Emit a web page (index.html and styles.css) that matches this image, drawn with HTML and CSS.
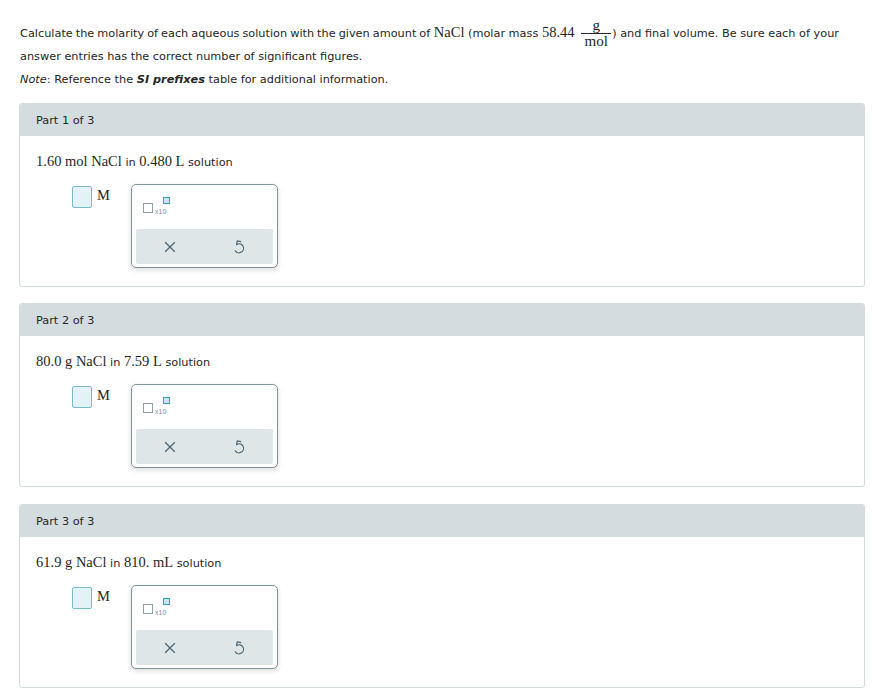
FILE: index.html
```html
<!DOCTYPE html>
<html>
<head>
<meta charset="utf-8">
<link rel="stylesheet" href="styles.css">
</head>
<body>
<div class="page">
  <div class="intro">
    <p class="line first"><span class="tight">Calculate the molarity of each aqueous solution with the given amount of</span> <span class="chem">NaCl</span> (molar mass <span class="chem">58.44</span> <span class="frac"><span class="num chem">g</span><span class="den chem">mol</span></span>) and final volume. Be sure each of your</p>
    <p class="line">answer entries has the correct number of significant figures.</p>
    <p class="line note"><em>Note</em>: Reference the <strong class="si">SI prefixes</strong> table for additional information.</p>
  </div>

  <div class="card">
    <div class="card-head">Part 1 of 3</div>
    <div class="card-body">
      <p class="problem"><span class="chem">1.60 mol NaCl</span> in <span class="chem">0.480 L</span> solution</p>
      <div class="answer">
        <div class="entry"><span class="box"></span><span class="unit chem">M</span></div>
        <div class="palette">
          <div class="tools">
            <span class="sci"><span class="sq"></span><span class="x10">x10</span><span class="sup"></span></span>
          </div>
          <div class="actions">
            <svg class="ico" width="12" height="12" viewBox="0 0 12 12"><path d="M1.2 1.2 L10.8 10.8 M10.8 1.2 L1.2 10.8" stroke="#4d6773" stroke-width="1.3" fill="none"/></svg>
            <svg class="ico" width="12" height="16" viewBox="0 0 12 16"><path d="M7.8 2.6 L4.2 1.8 L3.6 5.6" stroke="#4d6773" stroke-width="1.2" fill="none" stroke-linecap="round" stroke-linejoin="round"/><path d="M3.8 5.4 A4.5 4.5 0 1 1 2.3 11.8" stroke="#4d6773" stroke-width="1.2" fill="none" stroke-linecap="round"/></svg>
          </div>
        </div>
      </div>
    </div>
  </div>

  <div class="card">
    <div class="card-head">Part 2 of 3</div>
    <div class="card-body">
      <p class="problem"><span class="chem">80.0 g NaCl</span> in <span class="chem">7.59 L</span> solution</p>
      <div class="answer">
        <div class="entry"><span class="box"></span><span class="unit chem">M</span></div>
        <div class="palette">
          <div class="tools">
            <span class="sci"><span class="sq"></span><span class="x10">x10</span><span class="sup"></span></span>
          </div>
          <div class="actions">
            <svg class="ico" width="12" height="12" viewBox="0 0 12 12"><path d="M1.2 1.2 L10.8 10.8 M10.8 1.2 L1.2 10.8" stroke="#4d6773" stroke-width="1.3" fill="none"/></svg>
            <svg class="ico" width="12" height="16" viewBox="0 0 12 16"><path d="M7.8 2.6 L4.2 1.8 L3.6 5.6" stroke="#4d6773" stroke-width="1.2" fill="none" stroke-linecap="round" stroke-linejoin="round"/><path d="M3.8 5.4 A4.5 4.5 0 1 1 2.3 11.8" stroke="#4d6773" stroke-width="1.2" fill="none" stroke-linecap="round"/></svg>
          </div>
        </div>
      </div>
    </div>
  </div>

  <div class="card">
    <div class="card-head">Part 3 of 3</div>
    <div class="card-body">
      <p class="problem"><span class="chem">61.9 g NaCl</span> in <span class="chem">810. mL</span> solution</p>
      <div class="answer">
        <div class="entry"><span class="box"></span><span class="unit chem">M</span></div>
        <div class="palette">
          <div class="tools">
            <span class="sci"><span class="sq"></span><span class="x10">x10</span><span class="sup"></span></span>
          </div>
          <div class="actions">
            <svg class="ico" width="12" height="12" viewBox="0 0 12 12"><path d="M1.2 1.2 L10.8 10.8 M10.8 1.2 L1.2 10.8" stroke="#4d6773" stroke-width="1.3" fill="none"/></svg>
            <svg class="ico" width="12" height="16" viewBox="0 0 12 16"><path d="M7.8 2.6 L4.2 1.8 L3.6 5.6" stroke="#4d6773" stroke-width="1.2" fill="none" stroke-linecap="round" stroke-linejoin="round"/><path d="M3.8 5.4 A4.5 4.5 0 1 1 2.3 11.8" stroke="#4d6773" stroke-width="1.2" fill="none" stroke-linecap="round"/></svg>
          </div>
        </div>
      </div>
    </div>
  </div>
</div>
</body>
</html>
```

FILE: styles.css
```css
html, body {
  margin: 0;
  padding: 0;
  background: #ffffff;
}
body {
  font-family: "DejaVu Sans", Verdana, sans-serif;
  font-size: 11.3px;
  color: #262626;
}
.page {
  padding: 17px 11px 8px 19px;
}
.intro {
  padding-left: 1px;
}
.line {
  margin: 0;
  height: 20px;
  line-height: 20px;
  white-space: nowrap;
}
.line.first {
  height: 30px;
  line-height: 30px;
}
.tight {
  word-spacing: -0.6px;
}
.line.note {
  margin-top: 3px;
}
.chem {
  font-family: "Liberation Serif", "Times New Roman", serif;
  font-size: 14.5px;
}
.frac {
  display: inline-flex;
  flex-direction: column;
  align-items: center;
  vertical-align: middle;
  line-height: 13px;
  margin: 0 1px 0 3px;
  position: relative;
  top: -1px;
}
.frac .num {
  border-bottom: 1px solid #262626;
  padding: 0 4px 1px;
  width: 22px;
  text-align: center;
  font-size: 15px;
}
.frac .den {
  font-size: 15px;
  padding-top: 1px;
}
.note em {
  font-style: italic;
}
.si {
  font-style: italic;
  font-weight: bold;
}
.card {
  border: 1px solid #d4dcdf;
  border-radius: 3px;
  margin-top: 13px;
  height: 182px;
  overflow: hidden;
}
.card + .card {
  margin-top: 16px;
}
.card + .card + .card {
  margin-top: 17px;
}
.card-head {
  background: #d3dcdf;
  height: 32px;
  line-height: 33px;
  padding-left: 16px;
  color: #262626;
}
.card-body {
  padding: 16px 16px 0 16px;
}
.problem {
  margin: 0;
  height: 18px;
  line-height: 18px;
  white-space: nowrap;
}
.answer {
  display: flex;
  align-items: flex-start;
  margin-top: 14px;
  padding-left: 36px;
}
.entry {
  display: flex;
  align-items: flex-start;
  width: 59px;
  padding-top: 2px;
}
.box {
  display: block;
  width: 18px;
  height: 20px;
  border: 1px solid #77bccb;
  border-radius: 2px;
  background: #e3f2f6;
}
.unit {
  margin-left: 5px;
  line-height: 18px;
}
.palette {
  width: 145px;
  height: 82px;
  border: 1px solid #7d959e;
  border-radius: 5px;
  box-shadow: 0 2px 5px rgba(0, 0, 0, 0.15);
  display: flex;
  flex-direction: column;
  background: #fff;
}
.tools {
  height: 44px;
  padding: 12px 0 0 11px;
  box-sizing: border-box;
}
.sci {
  display: block;
  position: relative;
  width: 30px;
  height: 20px;
}
.sq {
  position: absolute;
  left: 0;
  top: 6px;
  width: 8px;
  height: 8px;
  border: 1.5px solid #8ea2aa;
}
.x10 {
  position: absolute;
  left: 12px;
  top: 11px;
  font-family: "Liberation Sans", Arial, sans-serif;
  font-size: 7px;
  line-height: 7px;
  color: #7a8f97;
}
.sup {
  position: absolute;
  left: 20px;
  top: 0;
  width: 5px;
  height: 5px;
  border: 1.5px solid #2ba5bd;
  background: #c3e7ef;
}
.actions {
  margin: 0 4px 3px 4px;
  height: 35px;
  background: #dfe6e8;
  border-radius: 2px;
  display: flex;
  align-items: center;
  justify-content: space-around;
}
.ico {
  display: block;
}
```
